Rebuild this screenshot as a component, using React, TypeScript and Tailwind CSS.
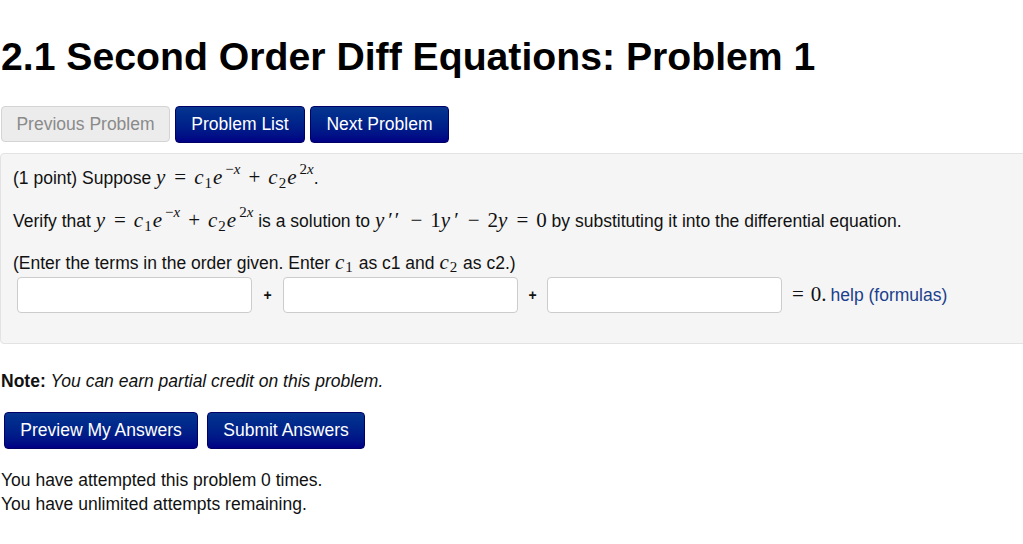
import React from "react";

const serif = "font-['Liberation_Serif',serif]";

function V({ children }: { children: React.ReactNode }) {
  return <i className={`${serif} text-[21px] pr-[1px]`}>{children}</i>;
}

function N({ children }: { children: React.ReactNode }) {
  return <span className={`${serif} text-[21px]`}>{children}</span>;
}

function Op({ children }: { children: React.ReactNode }) {
  return <span className={`${serif} text-[21px] mx-[8px]`}>{children}</span>;
}

function Sub({ children }: { children: React.ReactNode }) {
  return <sub className={`${serif} text-[15px] -bottom-[4px] pr-[1px]`}>{children}</sub>;
}

function Sup({ children }: { children: React.ReactNode }) {
  return <sup className={`${serif} text-[15px] -top-[10px] pl-[2px]`}>{children}</sup>;
}

function YExpr() {
  return (
    <span className="whitespace-nowrap">
      <V>y</V>
      <Op>=</Op>
      <V>c</V>
      <Sub>1</Sub>
      <V>e</V>
      <Sup>
        −<i>x</i>
      </Sup>
      <Op>+</Op>
      <V>c</V>
      <Sub>2</Sub>
      <V>e</V>
      <Sup>
        2<i>x</i>
      </Sup>
    </span>
  );
}

function BlueBtn({ children, className = "" }: { children: React.ReactNode; className?: string }) {
  return (
    <button
      className={`h-[37px] whitespace-nowrap rounded-[4px] border border-[#000066] bg-gradient-to-b from-[#07358f] to-[#000084] text-white text-[17.5px] ${className}`}
    >
      {children}
    </button>
  );
}

export default function App() {
  return (
    <div className="w-[1023px] h-[544px] overflow-hidden bg-white text-[#111] font-['Liberation_Sans',Arial,sans-serif] text-[17.5px]">
      <h1 className="pt-[33px] text-[39.2px] font-bold leading-[48px] text-black pl-[1px]">
        2.1 Second Order Diff Equations: Problem 1
      </h1>

      <div className="flex gap-[5px] mt-[25px] pl-[1px]">
        <button className="h-[36px] w-[169px] whitespace-nowrap rounded-[4px] border border-[#d4d4d4] bg-[#ececec] text-[#8a8a8a] text-[17.5px]">
          Previous Problem
        </button>
        <BlueBtn className="w-[130px] h-[36px]">Problem List</BlueBtn>
        <BlueBtn className="w-[139px] h-[36px]">Next Problem</BlueBtn>
      </div>

      <div className="mt-[10px] w-[1040px] rounded-[4px] border border-[#e3e3e3] bg-[#f5f5f5] pl-[12px] pt-[13px] pb-[30px]">
        <div className="h-[22px] flex items-center whitespace-nowrap">
          <span>(1 point) Suppose&nbsp;</span>
          <YExpr />
          <span>.</span>
        </div>
        <div className="h-[22px] flex items-center mt-[21px] whitespace-nowrap">
          <span>Verify that&nbsp;</span>
          <YExpr />
          <span>&nbsp;is a solution to&nbsp;</span>
          <span className="whitespace-nowrap">
            <V>y</V>
            <N>
              <span className="ml-[3px] mr-[1px] tracking-[2px]">′′</span>
            </N>
            <Op>−</Op>
            <N>1</N>
            <V>y</V>
            <N>
              <span className="ml-[3px] mr-[1px]">′</span>
            </N>
            <Op>−</Op>
            <N>2</N>
            <V>y</V>
            <Op>=</Op>
            <N>0</N>
          </span>
          <span>&nbsp;by substituting it into the differential equation.</span>
        </div>
        <div className="h-[22px] flex items-center mt-[20px] whitespace-nowrap">
          <span>(Enter the terms in the order given. Enter&nbsp;</span>
          <V>c</V>
          <Sub>1</Sub>
          <span>&nbsp;as c1 and&nbsp;</span>
          <V>c</V>
          <Sub>2</Sub>
          <span>&nbsp;as c2.)</span>
        </div>
        <div className="flex items-center mt-[3px] pl-[4px]">
          <input className="h-[36px] w-[235px] rounded-[4px] border border-[#cccccc] bg-white" />
          <span className="w-[31px] text-center text-[14px] font-bold">+</span>
          <input className="h-[36px] w-[235px] rounded-[4px] border border-[#cccccc] bg-white" />
          <span className="w-[29px] text-center text-[14px] font-bold">+</span>
          <input className="h-[36px] w-[235px] rounded-[4px] border border-[#cccccc] bg-white" />
          <span className="ml-[10px] whitespace-nowrap">
            <N>=</N>
            <N>
              <span className="ml-[7px]">0.</span>
            </N>
          </span>
          <span className="ml-[4px] text-[#1b3f8b] whitespace-nowrap">help (formulas)</span>
        </div>
      </div>

      <div className="mt-[27px] pl-[1px] leading-[20px]">
        <b>Note:</b> <i>You can earn partial credit on this problem.</i>
      </div>

      <div className="flex gap-[9px] mt-[21px] pl-[4px]">
        <BlueBtn className="w-[194px]">Preview My Answers</BlueBtn>
        <BlueBtn className="w-[158px]">Submit Answers</BlueBtn>
      </div>

      <div className="mt-[19px] pl-[1px] leading-[24px]">
        <div>You have attempted this problem 0 times.</div>
        <div>You have unlimited attempts remaining.</div>
      </div>
    </div>
  );
}
